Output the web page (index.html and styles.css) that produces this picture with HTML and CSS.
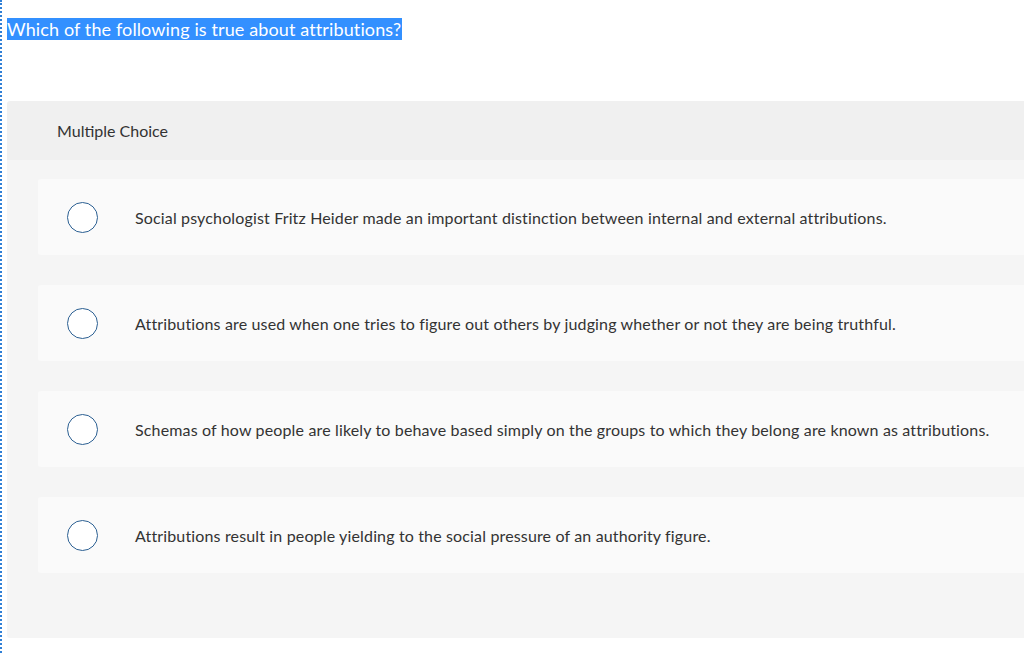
FILE: index.html
```html
<!DOCTYPE html>
<html>
<head>
<meta charset="utf-8">
<link rel="stylesheet" href="styles.css">
</head>
<body>
<div class="frame">
  <div class="question"><span class="q-text">Which of the following is true about attributions?</span></div>
  <section class="panel">
    <header class="panel-head">Multiple Choice</header>
    <div class="panel-body">
      <div class="choice"><span class="radio"></span><span class="label">Social psychologist Fritz Heider made an important distinction between internal and external attributions.</span></div>
      <div class="choice"><span class="radio"></span><span class="label">Attributions are used when one tries to figure out others by judging whether or not they are being truthful.</span></div>
      <div class="choice"><span class="radio"></span><span class="label">Schemas of how people are likely to behave based simply on the groups to which they belong are known as attributions.</span></div>
      <div class="choice"><span class="radio"></span><span class="label">Attributions result in people yielding to the social pressure of an authority figure.</span></div>
    </div>
  </section>
</div>
</body>
</html>
```
FILE: styles.css
```css
html, body {
  margin: 0;
  padding: 0;
  background: #fff;
  overflow: hidden;
}
body {
  font-family: "Lato", "Liberation Sans", sans-serif;
  color: #333;
}
.frame {
  height: 653px;
  box-sizing: border-box;
  border-left: 2px dotted #2f7fd6;
  padding-left: 5px;
  overflow: hidden;
}
.question {
  padding-top: 17px;
  font-size: 18px;
  line-height: 25px;
  letter-spacing: 0.12px;
}
.q-text {
  background: #3390ff;
  color: #fff;
  padding-right: 1px;
}
.panel {
  margin-top: 59px;
  width: 1040px;
  border-radius: 3px;
  overflow: hidden;
}
.panel-head {
  background: #f0f0f0;
  height: 59px;
  display: flex;
  align-items: center;
  padding-left: 50px;
  font-size: 16px;
}
.panel-body {
  background: #f5f5f5;
  padding: 19px 0 65px 31px;
  display: flex;
  flex-direction: column;
  gap: 30px;
}
.choice {
  background: #fafafa;
  height: 76px;
  border-radius: 3px;
  display: flex;
  align-items: center;
  padding-left: 29px;
  font-size: 16px;
  letter-spacing: 0.15px;
}
.radio {
  width: 29px;
  height: 29px;
  border: 1.5px solid #2b5f92;
  border-radius: 50%;
  background: #fff;
  flex: none;
  margin-right: 37px;
}
.label {
  white-space: nowrap;
}
```
